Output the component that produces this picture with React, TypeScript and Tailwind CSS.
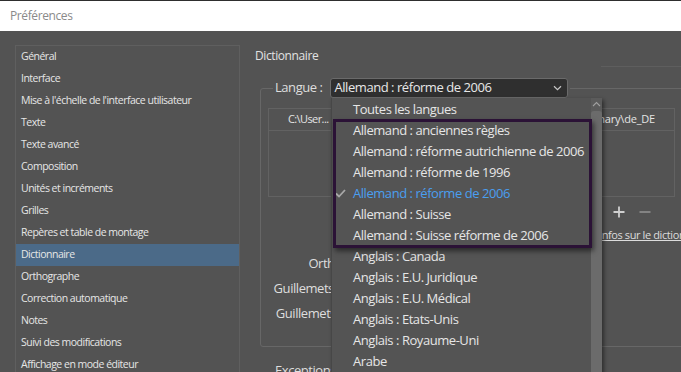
import React from "react";

const side = [
  "Général",
  "Interface",
  "Mise à l'échelle de l'interface utilisateur",
  "Texte",
  "Texte avancé",
  "Composition",
  "Unités et incréments",
  "Grilles",
  "Repères et table de montage",
  "Dictionnaire",
  "Orthographe",
  "Correction automatique",
  "Notes",
  "Suivi des modifications",
  "Affichage en mode éditeur",
];

const langs = [
  "Toutes les langues",
  "Allemand : anciennes règles",
  "Allemand : réforme autrichienne de 2006",
  "Allemand : réforme de 1996",
  "Allemand : réforme de 2006",
  "Allemand : Suisse",
  "Allemand : Suisse réforme de 2006",
  "Anglais : Canada",
  "Anglais : E.U. Juridique",
  "Anglais : E.U. Médical",
  "Anglais : Etats-Unis",
  "Anglais : Royaume-Uni",
  "Arabe",
];

export default function App() {
  return (
    <div
      className="relative w-[681px] h-[372px] overflow-hidden bg-[#535353]"
      style={{ fontFamily: '"Open Sans", "Noto Sans", sans-serif' }}
    >
      {/* title bar */}
      <div className="h-[31px] bg-white border-t border-[#2e2e2e] flex items-center pl-[10px] text-[12px] tracking-[-0.4px] text-[#8a8a8a]">
        Préférences
      </div>

      <div className="flex pt-[14px] pl-[15px]">
        {/* sidebar */}
        <div className="w-[225px] h-[340px] border border-[#5f5f5f] shrink-0">
          {side.map((s) => (
            <div
              key={s}
              className={
                "h-[22px] flex items-center pl-[5px] text-[10.5px] tracking-[-0.5px] text-[#e6e6e6] whitespace-nowrap " +
                (s === "Dictionnaire" ? "bg-[#4b6a88]" : "")
              }
            >
              {s}
            </div>
          ))}
        </div>

        {/* right panel */}
        <div className="ml-[15px] flex-1 min-w-0">
          <div className="flex items-center h-[22px] text-[12px] tracking-[-0.4px] text-[#e2e2e2]">
            Dictionnaire
            <div className="ml-auto w-[80px] h-px bg-[#5e5e5e] mt-[20px]" />
          </div>

          <fieldset className="ml-[5px] mt-[11px] w-[460px] h-[269px] border border-[#676767] rounded-[3px] pl-[7px]">
            <legend className="ml-[5px] px-[2px] flex items-center">
              <span className="text-[13px] tracking-[-0.45px] text-[#dedede] pr-[7px]">Langue :</span>
              <div className="w-[238px] h-[20px] bg-[#2f2f2f] border border-[#6a6a6a] rounded-[3px] flex items-center pl-[4px] text-[13px] tracking-[-0.45px] text-[#e8e8e8]">
                Allemand : réforme de 2006
                <svg className="ml-auto mr-[5px]" width="9" height="6" viewBox="0 0 9 6">
                  <path d="M1 1.2 L4.5 4.6 L8 1.2" stroke="#c8c8c8" strokeWidth="1.2" fill="none" />
                </svg>
              </div>
            </legend>

            {/* path box */}
            <div className="mt-[10px] w-[407px] h-[89px] border border-[#626262]">
              <div className="h-[22px] border-b border-[#626262] flex items-center justify-between text-[11px] text-[#e4e4e4]">
                <span className="pl-[19px] tracking-[-0.6px]">C:\User...</span>
                <span className="pr-[19px] tracking-[-0.2px]">C:\Users\Adobe\UserDictionary\de_DE</span>
              </div>
            </div>

            <div className="flex justify-end w-[383px] mt-[5px] h-[20px] items-center gap-[14px]">
              <svg width="12" height="12" viewBox="0 0 12 12">
                <path d="M6 0.5 V11.5 M0.5 6 H11.5" stroke="#cfcfcf" strokeWidth="1.8" />
              </svg>
              <svg width="12" height="12" viewBox="0 0 12 12">
                <path d="M0.5 6 H11.5" stroke="#8a8a8a" strokeWidth="1.8" />
              </svg>
            </div>

            <div className="pl-[331px] mt-[4px] h-[18px] flex items-center text-[11px] tracking-[-0.4px] text-[#dcdcdc] underline whitespace-nowrap">
              Infos sur le dictionnaire
            </div>

            <div className="mt-[8px] w-[120px] flex flex-col items-end text-[13px] tracking-[-0.45px] text-[#dedede] whitespace-nowrap">
              <div className="h-[24px] flex items-center">Orthographe :</div>
              <div className="h-[25px] flex items-center">Guillemets doubles :</div>
              <div className="h-[25px] flex items-center">Guillemets simples :</div>
            </div>
          </fieldset>

          <div className="ml-[20px] mt-[14px] text-[13px] tracking-[-0.45px] text-[#dedede] whitespace-nowrap">
            Exceptions de césure :
          </div>
        </div>
      </div>

      {/* open dropdown list */}
      <div className="absolute left-[331px] top-[98px] w-[271px] h-[290px] bg-[#545454] border-l border-[#474747] shadow-[2px_2px_4px_rgba(0,0,0,0.45)] flex">
        <div className="flex-1 pt-[1px]">
          {langs.map((l, i) => (
            <div
              key={l}
              className={
                "relative h-[21px] flex items-center pl-[21px] text-[13px] tracking-[-0.45px] whitespace-nowrap " +
                (i === 4 ? "text-[#4a9ff0]" : "text-[#e6e6e6]")
              }
            >
              {i === 4 && (
                <svg className="absolute left-[3px] top-[6px]" width="11" height="9" viewBox="0 0 11 9">
                  <path d="M1 4.5 L4 7.5 L10 1" stroke="#a8a8a8" strokeWidth="1.8" fill="none" />
                </svg>
              )}
              {l}
            </div>
          ))}
        </div>
        <div className="w-[11px] bg-[#5b5b5b] flex flex-col items-center">
          <svg className="mt-[3px]" width="9" height="6" viewBox="0 0 9 6">
            <path d="M1 5 L4.5 1.5 L8 5" stroke="#a0a0a0" strokeWidth="1.1" fill="none" />
          </svg>
          <div className="mt-[4px] w-[11px] flex-1 bg-[#6b6b6b] rounded-t-[3px]" />
        </div>

        {/* highlight box */}
        <div className="absolute left-[1px] top-[21px] w-[259px] h-[129px] border-[3px] border-[#2b1236] shadow-[2px_3px_5px_rgba(0,0,0,0.5)] pointer-events-none" />
      </div>
    </div>
  );
}
